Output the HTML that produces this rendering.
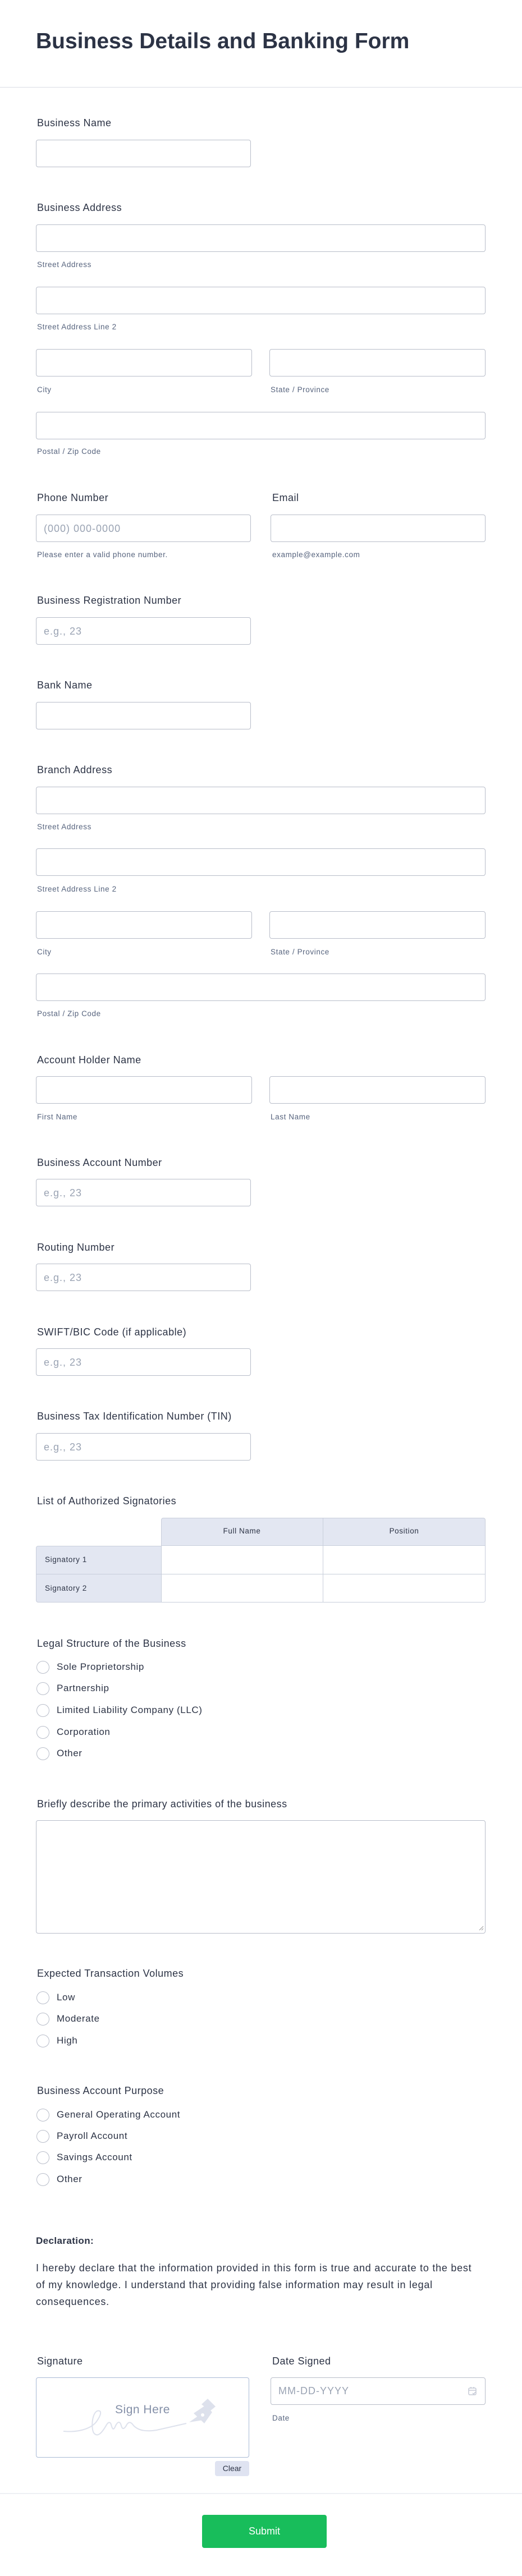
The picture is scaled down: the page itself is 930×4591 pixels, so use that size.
<!DOCTYPE html>
<html><head><meta charset="utf-8">
<style>
*{margin:0;padding:0;box-sizing:border-box}
body{width:930px;height:4591px;background:#fff;font-family:"Liberation Sans",sans-serif;position:relative;overflow:hidden;color:#2c3345}
.a{position:absolute;white-space:nowrap}
.t{position:absolute;font-size:39px;font-weight:bold;color:#2c3345;left:64px;top:52px;letter-spacing:0px}
.l{position:absolute;font-size:18px;line-height:20px;color:#2c3345;left:66px;white-space:nowrap;letter-spacing:0.5px}
.s{position:absolute;font-size:13.5px;line-height:16px;color:#57647e;white-space:nowrap;letter-spacing:0.6px}
.i{position:absolute;height:49px;border:1px solid #b8bdc9;border-radius:4px;background:#fff}
.ph{position:absolute;left:13px;top:13px;font-size:18px;line-height:22px;color:#9aa3b3;letter-spacing:1px}
.r{position:absolute;left:65px;width:23px;height:23px;border:1px solid #b8bdc9;border-radius:50%}
.rt{position:absolute;left:101px;font-size:17px;line-height:20px;color:#2c3345;white-space:nowrap;letter-spacing:0.6px}
</style></head><body>
<div class="t">Business Details and Banking Form</div>
<div class="a" style="left:0;top:155px;width:930px;height:1px;background:#dadde4"></div>

<div class="l" style="top:209px">Business Name</div>
<div class="i" style="left:64px;top:249px;width:383px"></div>

<div class="l" style="top:360px">Business Address</div>
<div class="i" style="left:64px;top:400px;width:801px"></div>
<div class="s" style="left:66px;top:464px">Street Address</div>
<div class="i" style="left:64px;top:511px;width:801px"></div>
<div class="s" style="left:66px;top:575px">Street Address Line 2</div>
<div class="i" style="left:64px;top:622px;width:385px"></div>
<div class="i" style="left:480px;top:622px;width:385px"></div>
<div class="s" style="left:66px;top:687px">City</div>
<div class="s" style="left:482px;top:687px">State / Province</div>
<div class="i" style="left:64px;top:734px;width:801px"></div>
<div class="s" style="left:66px;top:797px">Postal / Zip Code</div>

<div class="l" style="top:877px">Phone Number</div>
<div class="l" style="top:877px;left:485px">Email</div>
<div class="i" style="left:64px;top:917px;width:383px"><span class="ph">(000) 000-0000</span></div>
<div class="i" style="left:482px;top:917px;width:383px"></div>
<div class="s" style="left:66px;top:981px">Please enter a valid phone number.</div>
<div class="s" style="left:485px;top:981px">example@example.com</div>

<div class="l" style="top:1060px">Business Registration Number</div>
<div class="i" style="left:64px;top:1100px;width:383px"><span class="ph">e.g., 23</span></div>

<div class="l" style="top:1211px">Bank Name</div>
<div class="i" style="left:64px;top:1251px;width:383px"></div>

<div class="l" style="top:1362px">Branch Address</div>
<div class="i" style="left:64px;top:1402px;width:801px"></div>
<div class="s" style="left:66px;top:1466px">Street Address</div>
<div class="i" style="left:64px;top:1512px;width:801px"></div>
<div class="s" style="left:66px;top:1577px">Street Address Line 2</div>
<div class="i" style="left:64px;top:1624px;width:385px"></div>
<div class="i" style="left:480px;top:1624px;width:385px"></div>
<div class="s" style="left:66px;top:1689px">City</div>
<div class="s" style="left:482px;top:1689px">State / Province</div>
<div class="i" style="left:64px;top:1735px;width:801px"></div>
<div class="s" style="left:66px;top:1799px">Postal / Zip Code</div>

<div class="l" style="top:1879px">Account Holder Name</div>
<div class="i" style="left:64px;top:1918px;width:385px"></div>
<div class="i" style="left:480px;top:1918px;width:385px"></div>
<div class="s" style="left:66px;top:1983px">First Name</div>
<div class="s" style="left:482px;top:1983px">Last Name</div>

<div class="l" style="top:2062px">Business Account Number</div>
<div class="i" style="left:64px;top:2101px;width:383px"><span class="ph">e.g., 23</span></div>
<div class="l" style="top:2213px">Routing Number</div>
<div class="i" style="left:64px;top:2252px;width:383px"><span class="ph">e.g., 23</span></div>
<div class="l" style="top:2364px">SWIFT/BIC Code (if applicable)</div>
<div class="i" style="left:64px;top:2403px;width:383px"><span class="ph">e.g., 23</span></div>
<div class="l" style="top:2514px">Business Tax Identification Number (TIN)</div>
<div class="i" style="left:64px;top:2554px;width:383px"><span class="ph">e.g., 23</span></div>

<div class="l" style="top:2665px">List of Authorized Signatories</div>
<div class="a" style="left:287px;top:2705px;width:578px;height:50px;background:#e3e7f2;border:1px solid #c8cedb;border-radius:4px 4px 0 0"></div>
<div class="a" style="left:575px;top:2705px;width:1px;height:151px;background:#c8cedb"></div>
<div class="a" style="left:64px;top:2755px;width:224px;height:101px;background:#e3e7f2;border:1px solid #c8cedb;border-radius:4px 0 0 4px"></div>
<div class="a" style="left:287px;top:2754px;width:578px;height:102px;border:1px solid #c8cedb;border-top:none;border-radius:0 0 4px 0"></div>
<div class="a" style="left:64px;top:2805px;width:801px;height:1px;background:#c8cedb"></div>
<div class="s" style="left:287px;width:288px;text-align:center;top:2721px;color:#2c3345;font-size:13.5px">Full Name</div>
<div class="s" style="left:575px;width:290px;text-align:center;top:2721px;color:#2c3345;font-size:13.5px">Position</div>
<div class="s" style="left:80px;top:2772px;color:#2c3345">Signatory 1</div>
<div class="s" style="left:80px;top:2823px;color:#2c3345">Signatory 2</div>

<div class="l" style="top:2919px">Legal Structure of the Business</div>
<div class="r" style="top:2960px"></div><div class="rt" style="top:2961px">Sole Proprietorship</div>
<div class="r" style="top:2998px"></div><div class="rt" style="top:2999px">Partnership</div>
<div class="r" style="top:3037px"></div><div class="rt" style="top:3038px">Limited Liability Company (LLC)</div>
<div class="r" style="top:3076px"></div><div class="rt" style="top:3077px">Corporation</div>
<div class="r" style="top:3114px"></div><div class="rt" style="top:3115px">Other</div>

<div class="l" style="top:3205px">Briefly describe the primary activities of the business</div>
<div class="a" style="left:64px;top:3244px;width:801px;height:202px;border:1px solid #b8bdc9;border-radius:4px"></div>
<svg class="a" style="left:852px;top:3431px" width="10" height="10"><path d="M2 9L9 2M6 9L9 6" stroke="#999" stroke-width="1"/></svg>

<div class="l" style="top:3507px">Expected Transaction Volumes</div>
<div class="r" style="top:3549px"></div><div class="rt" style="top:3550px">Low</div>
<div class="r" style="top:3587px"></div><div class="rt" style="top:3588px">Moderate</div>
<div class="r" style="top:3626px"></div><div class="rt" style="top:3627px">High</div>

<div class="l" style="top:3716px">Business Account Purpose</div>
<div class="r" style="top:3758px"></div><div class="rt" style="top:3759px">General Operating Account</div>
<div class="r" style="top:3796px"></div><div class="rt" style="top:3797px">Payroll Account</div>
<div class="r" style="top:3834px"></div><div class="rt" style="top:3835px">Savings Account</div>
<div class="r" style="top:3873px"></div><div class="rt" style="top:3874px">Other</div>

<div class="a" style="left:64px;top:3984px;font-size:17px;font-weight:bold;line-height:20px;color:#2c3345;letter-spacing:0.4px">Declaration:</div>
<div class="a" style="left:64px;top:4027px;font-size:18px;line-height:30px;color:#2c3345;letter-spacing:0.75px">I hereby declare that the information provided in this form is true and accurate to the best<br>of my knowledge. I understand that providing false information may result in legal<br>consequences.</div>

<div class="l" style="top:4198px">Signature</div>
<div class="l" style="top:4198px;left:485px">Date Signed</div>
<div class="a" style="left:64px;top:4237px;width:380px;height:143px;border:1px solid #a9bad6;border-radius:4px"></div>
<div class="a" style="left:64px;width:380px;text-align:center;top:4283px;font-size:21px;color:#8590a8;letter-spacing:0.5px">Sign Here</div>
<svg class="a" style="left:64px;top:4237px" width="380" height="143">
<path d="M49 96 C70 98 95 94 107 80 C120 62 115 58 109 60 C100 64 98 90 103 99 C110 108 118 98 125 86 C128 80 132 78 134 84 C136 92 138 96 142 86 C146 78 150 78 152 86 C154 94 158 92 162 84 C166 78 170 80 174 86 C180 92 190 98 215 94 L268 82" fill="none" stroke="#dde1ec" stroke-width="2"/>
<path d="M273 80 L290 68 L298 76 Z M281 64 L302 50 L314 62 L300 82 Z" fill="#dde1ec"/>
<path d="M295 48 L306 38 L320 52 L310 60 Z" fill="#dde1ec"/>
<circle cx="297" cy="67" r="3" fill="#fff"/>
</svg>
<div class="a" style="left:383px;top:4386px;width:61px;height:27px;background:#dfe3f1;border-radius:4px;font-size:14px;line-height:27px;text-align:center;color:#2c3345">Clear</div>
<div class="i" style="left:482px;top:4237px;width:383px;height:49px"><span class="ph" style="top:12px">MM-DD-YYYY</span></div>
<svg class="a" style="left:833px;top:4252px" width="18" height="18"><rect x="2" y="4" width="13" height="12" rx="2" fill="none" stroke="#c5cad6" stroke-width="1.5"/><path d="M2 8H15M6 2V5M11 2V5M9 13L11 15L14 11" fill="none" stroke="#c5cad6" stroke-width="1.5"/></svg>
<div class="s" style="left:485px;top:4302px">Date</div>

<div class="a" style="left:0;top:4443px;width:930px;height:2px;background:#eef0f4"></div>
<div class="a" style="left:360px;top:4482px;width:222px;height:59px;background:#18bd5b;border-radius:4px;color:#fff;font-size:18px;line-height:59px;text-align:center">Submit</div>
</body></html>
